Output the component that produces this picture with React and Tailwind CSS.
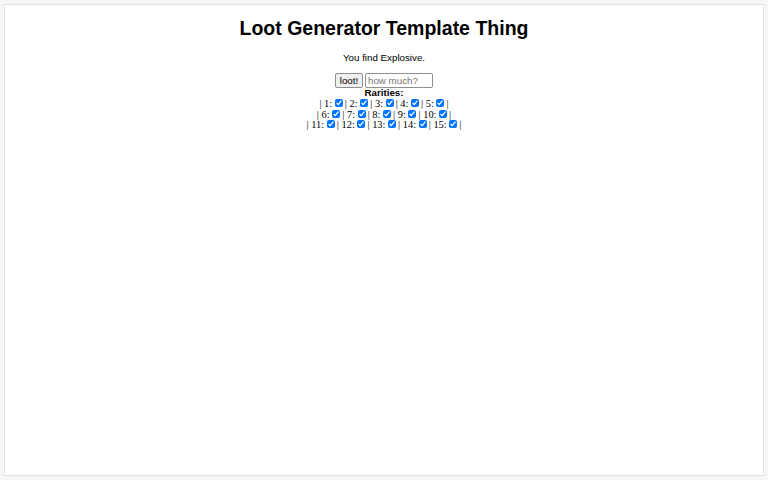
const rows = [
  [1, 2, 3, 4, 5],
  [6, 7, 8, 9, 10],
  [11, 12, 13, 14, 15],
];

const App = () => {
  return (
    <div className="h-[480px] bg-[#f7f7f7] p-[4px] font-['Liberation_Sans',Arial,sans-serif] text-black">
      <div className="h-[472px] border border-[#e2e2e2] bg-white text-center">
        <h1 className="pt-[9px] text-[19.5px] leading-[28px] font-bold">
          Loot Generator Template Thing
        </h1>

        <p className="mt-[10px] text-[9.75px] leading-[12px]">You find Explosive.</p>

        <div className="mt-[9px] flex h-[15px] items-center justify-center gap-[2px]">
          <button className="h-[15px] w-[28px] rounded-[2px] border border-[#8f8f8f] bg-[#efefef] text-[9.75px] leading-[13px]">
            loot!
          </button>
          <input
            type="text"
            placeholder="how much?"
            className="h-[15px] w-[68px] rounded-[2px] border border-[#8f8f8f] px-[2px] text-[9.75px] leading-[13px] placeholder:text-[#757575]"
          />
        </div>

        <div className="text-[9.75px] leading-[10px] font-bold">Rarities:</div>

        {/* rarity checkboxes */}
        <div className="pt-[1px] font-['Liberation_Serif','Times_New_Roman',serif] text-[10.4px] leading-[10.6px]">
          {rows.map((row, index) => (
            <div key={index} className="h-[10.6px]">
              |
              {row.map((n) => (
                <span key={n}>
                  {" "}
                  {n}:{" "}
                  <input
                    type="checkbox"
                    defaultChecked
                    className="m-0 -mr-[0.6px] inline-block h-[8px] w-[8px] align-baseline"
                  />{" "}
                  |
                </span>
              ))}
            </div>
          ))}
        </div>
      </div>
    </div>
  );
};

export default App;
